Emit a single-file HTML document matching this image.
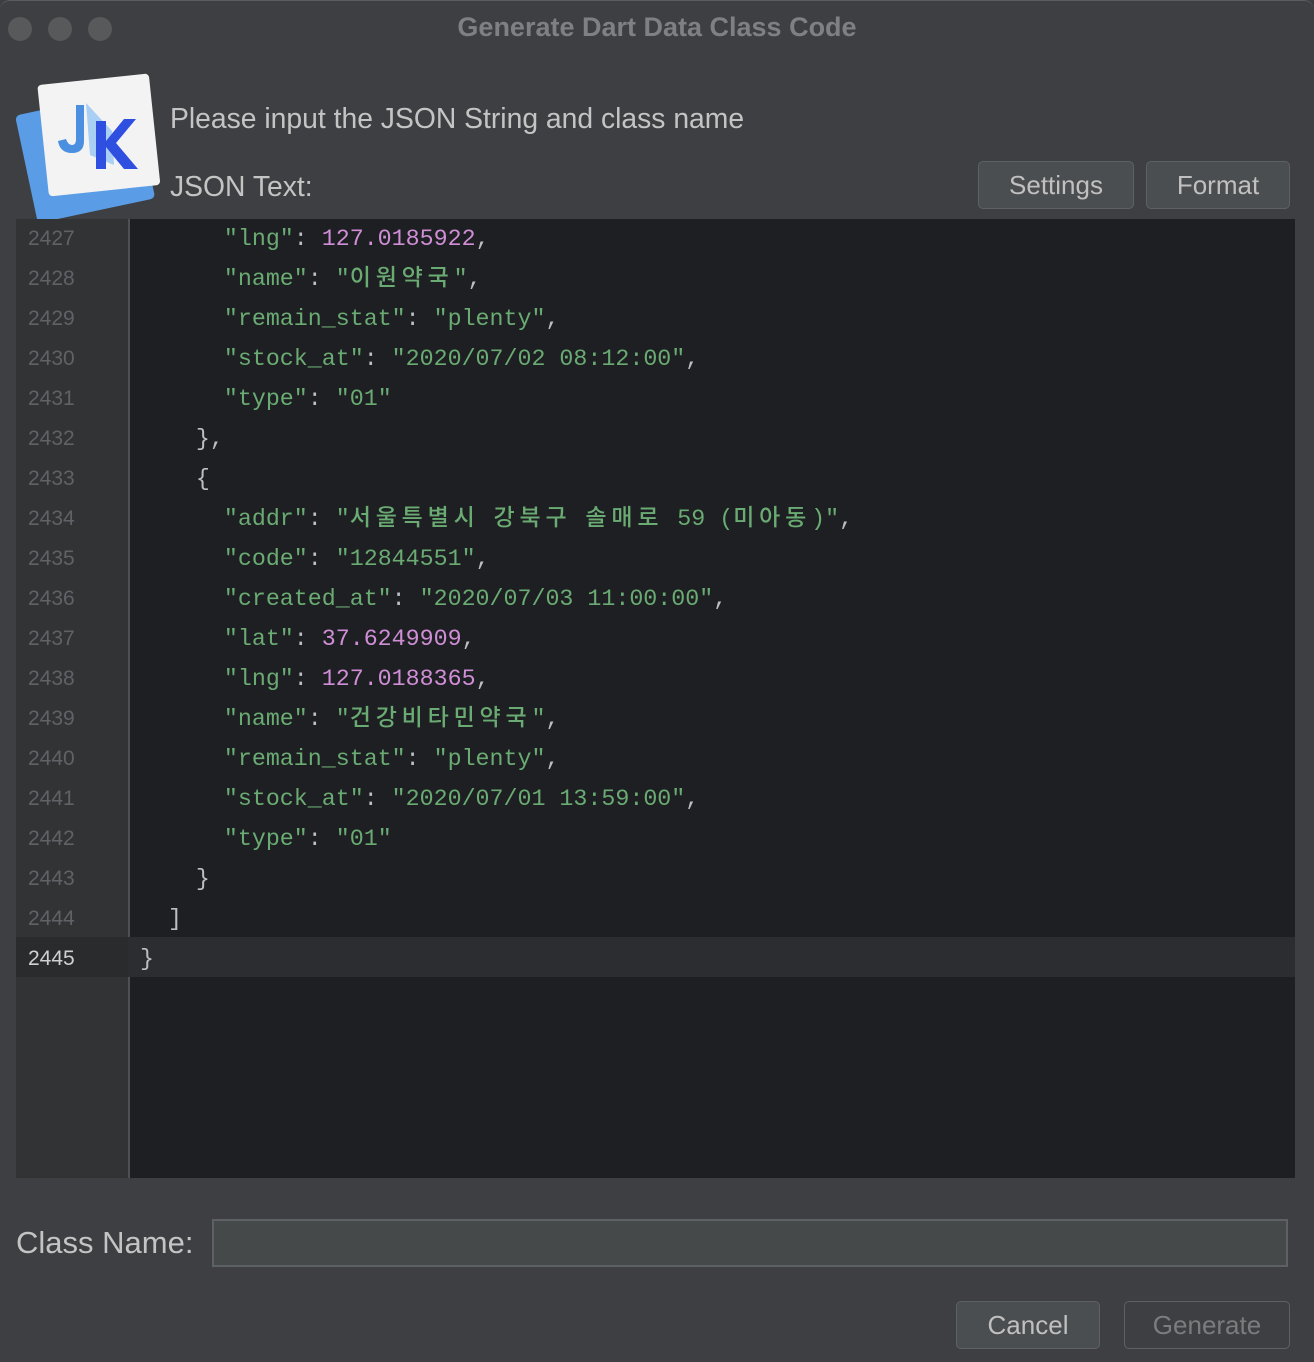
<!DOCTYPE html>
<html><head><meta charset="utf-8"><style>
*{margin:0;padding:0;box-sizing:border-box}
body{width:1314px;height:1362px;background:#3c3f41;font-family:"Liberation Sans",sans-serif;position:relative;overflow:hidden;color:#bbb}
.win{position:absolute;left:0;top:0;width:1314px;height:1362px;background:#3d3f42;border-radius:10px 10px 0 0;border-top:1px solid #5a5c5e}
.dot{position:absolute;top:16px;width:24px;height:24px;border-radius:50%;background:#58595b}
.title{position:absolute;top:11px;left:0;width:1314px;text-align:center;font-size:27px;font-weight:bold;color:#7e8083}
.lbl{position:absolute;font-size:28.3px;color:#c4c4c4}
.btn{position:absolute;height:48px;border:1px solid #5e6164;border-radius:5px;background:#4b4e51;color:#c0c0c0;font-size:26px;text-align:center;line-height:46px}
.editor{position:absolute;left:16px;top:218px;width:1279px;height:959px;background:#1e1f22}
.gut{position:absolute;left:0;top:0;width:114px;height:959px;background:#313335;border-right:2px solid #4e5052}
.ln{position:absolute;left:12px;font-family:"Liberation Sans",sans-serif;font-size:21px;color:#5f6266;height:40px;line-height:40px}
.cur{position:absolute;left:0;top:718px;width:1279px;height:40px;background:#2b2d30}
.code{position:absolute;left:124px;font-family:"Liberation Mono","Noto Sans CJK KR",monospace;font-size:23.3px;color:#bcbec4;white-space:pre;height:40px;line-height:40px}
.s{color:#6aab73}.n{color:#cf8ed6}
.k{font-family:"Noto Sans CJK KR",sans-serif;font-size:23px;letter-spacing:4.8px;line-height:0;font-weight:500}
</style></head><body>
<div class="win">
<div class="dot" style="left:8px"></div><div class="dot" style="left:48px"></div><div class="dot" style="left:88px"></div>
<div class="title">Generate Dart Data Class Code</div>
<svg style="position:absolute;left:14px;top:70px" width="150" height="150" viewBox="0 0 150 150">
<g transform="rotate(-12 75 80)"><rect x="10" y="30" width="120" height="110" rx="5" fill="#5a9de6"/></g>
<g transform="rotate(-6 85 75)"><rect x="30" y="8" width="112" height="112" rx="4" fill="#f3f3f3"/></g>
<path d="M62 34 L70 34 L70 70 Q70 82 58 82 Q46 82 44 70 L52 68 Q54 74 58 74 Q62 74 62 68 Z" fill="#4b8fe0"/>
<path d="M72 32 L98 60 L100 94 L76 84 Z" fill="#a9cff5"/>
<path d="M82 50 L92 50 L92 70 L110 48 L122 48 L102 72 L124 98 L110 98 L92 76 L92 98 L82 98 Z" fill="#2f4fe0"/>
</svg>
<div class="lbl" style="left:170px;top:101px">Please input the JSON String and class name</div>
<div class="lbl" style="left:170px;top:169px">JSON Text:</div>
<div class="btn" style="left:978px;top:160px;width:156px">Settings</div>
<div class="btn" style="left:1146px;top:160px;width:144px">Format</div>
<div class="editor">
<div class="gut"></div>
<div class="cur"></div>
<div style="position:absolute;left:0;top:718px;width:112px;height:40px;background:#2a2b2d"></div>
<div class="ln" style="top:0">2427</div><div class="ln" style="top:40px">2428</div><div class="ln" style="top:80px">2429</div><div class="ln" style="top:120px">2430</div><div class="ln" style="top:160px">2431</div><div class="ln" style="top:200px">2432</div><div class="ln" style="top:240px">2433</div><div class="ln" style="top:280px">2434</div><div class="ln" style="top:320px">2435</div><div class="ln" style="top:360px">2436</div><div class="ln" style="top:400px">2437</div><div class="ln" style="top:440px">2438</div><div class="ln" style="top:480px">2439</div><div class="ln" style="top:520px">2440</div><div class="ln" style="top:560px">2441</div><div class="ln" style="top:600px">2442</div><div class="ln" style="top:640px">2443</div><div class="ln" style="top:680px">2444</div><div class="ln" style="top:720px;color:#d0d0d0">2445</div>
<div class="code" style="top:0">      <span class="s">"lng"</span>: <span class="n">127.0185922</span>,</div>
<div class="code" style="top:40px">      <span class="s">"name"</span>: <span class="s">"<span class="k">이원약국</span>"</span>,</div>
<div class="code" style="top:80px">      <span class="s">"remain_stat"</span>: <span class="s">"plenty"</span>,</div>
<div class="code" style="top:120px">      <span class="s">"stock_at"</span>: <span class="s">"2020/07/02 08:12:00"</span>,</div>
<div class="code" style="top:160px">      <span class="s">"type"</span>: <span class="s">"01"</span></div>
<div class="code" style="top:200px">    },</div>
<div class="code" style="top:240px">    {</div>
<div class="code" style="top:280px">      <span class="s">"addr"</span>: <span class="s">"<span class="k">서울특별시</span> <span class="k">강북구</span> <span class="k">솔매로</span> 59 (<span class="k">미아동</span>)"</span>,</div>
<div class="code" style="top:320px">      <span class="s">"code"</span>: <span class="s">"12844551"</span>,</div>
<div class="code" style="top:360px">      <span class="s">"created_at"</span>: <span class="s">"2020/07/03 11:00:00"</span>,</div>
<div class="code" style="top:400px">      <span class="s">"lat"</span>: <span class="n">37.6249909</span>,</div>
<div class="code" style="top:440px">      <span class="s">"lng"</span>: <span class="n">127.0188365</span>,</div>
<div class="code" style="top:480px">      <span class="s">"name"</span>: <span class="s">"<span class="k">건강비타민약국</span>"</span>,</div>
<div class="code" style="top:520px">      <span class="s">"remain_stat"</span>: <span class="s">"plenty"</span>,</div>
<div class="code" style="top:560px">      <span class="s">"stock_at"</span>: <span class="s">"2020/07/01 13:59:00"</span>,</div>
<div class="code" style="top:600px">      <span class="s">"type"</span>: <span class="s">"01"</span></div>
<div class="code" style="top:640px">    }</div>
<div class="code" style="top:680px">  ]</div>
<div class="code" style="top:720px">}</div>
</div>
<div class="lbl" style="left:16px;top:1224px;font-size:31px">Class Name:</div>
<div style="position:absolute;left:212px;top:1218px;width:1076px;height:48px;background:#45494a;border:2px solid #5e6164"></div>
<div class="btn" style="left:956px;top:1300px;width:144px;border-color:#5e6164">Cancel</div>
<div class="btn" style="left:1124px;top:1300px;width:166px;background:#3d3f42;color:#7a7c7e">Generate</div>
</div>
</body></html>
